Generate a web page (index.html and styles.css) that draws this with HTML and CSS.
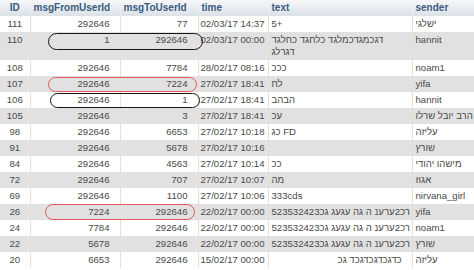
FILE: index.html
```html
<!DOCTYPE html>
<html lang="he">
<head>
<meta charset="utf-8">
<link rel="stylesheet" href="styles.css">
</head>
<body>
<div class="wrap">
<table class="grid">
<colgroup>
<col class="c-id"><col class="c-from"><col class="c-to"><col class="c-time"><col class="c-text"><col class="c-sender">
</colgroup>
<thead>
<tr><th class="id">ID</th><th>msgFromUserId</th><th>msgToUserId</th><th>time</th><th>text</th><th>sender</th></tr>
</thead>
<tbody>
<tr class="odd"><td class="id">111</td><td class="num">292646</td><td class="num">77</td><td class="time">02/03/17 14:37</td><td>5+</td><td>ישלגי</td></tr>
<tr class="even"><td class="id">110</td><td class="num">1</td><td class="num">292646</td><td class="time">02/03/17 00:00</td><td class="multi">דגכמגדכמלגד כלחגד כחלגד דגרלג</td><td>hannit</td></tr>
<tr class="odd"><td class="id">108</td><td class="num">292646</td><td class="num">7784</td><td class="time">28/02/17 08:16</td><td>כככ</td><td>noam1</td></tr>
<tr class="even"><td class="id">107</td><td class="num">292646</td><td class="num">7224</td><td class="time">27/02/17 18:41</td><td>לח</td><td>yifa</td></tr>
<tr class="odd"><td class="id">106</td><td class="num">292646</td><td class="num">1</td><td class="time">27/02/17 18:41</td><td>הבהב</td><td>hannit</td></tr>
<tr class="even"><td class="id">105</td><td class="num">292646</td><td class="num">3</td><td class="time">27/02/17 18:41</td><td>עכ</td><td>הרב יובל שרלו</td></tr>
<tr class="odd"><td class="id">98</td><td class="num">292646</td><td class="num">6653</td><td class="time">27/02/17 10:18</td><td>כג FD</td><td>עליזה</td></tr>
<tr class="even"><td class="id">91</td><td class="num">292646</td><td class="num">5678</td><td class="time">27/02/17 10:16</td><td></td><td>שורץ</td></tr>
<tr class="odd"><td class="id">84</td><td class="num">292646</td><td class="num">4563</td><td class="time">27/02/17 10:14</td><td>ככ</td><td>מישהו יהודי</td></tr>
<tr class="even"><td class="id">72</td><td class="num">292646</td><td class="num">707</td><td class="time">27/02/17 10:07</td><td>מה</td><td>אגוז</td></tr>
<tr class="odd"><td class="id">69</td><td class="num">292646</td><td class="num">1100</td><td class="time">27/02/17 10:06</td><td>333cds</td><td>nirvana_girl</td></tr>
<tr class="even"><td class="id">26</td><td class="num">7224</td><td class="num">292646</td><td class="time">22/02/17 00:00</td><td>רכ2ערענ ה גה עגעג גכ523532423</td><td>yifa</td></tr>
<tr class="odd"><td class="id">24</td><td class="num">7784</td><td class="num">292646</td><td class="time">22/02/17 00:00</td><td>רכ2ערענ ה גה עגעג גכ523532423</td><td>noam1</td></tr>
<tr class="even"><td class="id">22</td><td class="num">5678</td><td class="num">292646</td><td class="time">22/02/17 00:00</td><td>רכ2ערענ ה גה עגעג גכ523532423</td><td>שורץ</td></tr>
<tr class="odd"><td class="id">20</td><td class="num">6653</td><td class="num">292646</td><td class="time">15/02/17 00:00</td><td class="far">כדגכדגכדגכד גכ</td><td>עליזה</td></tr>
</tbody>
</table>
<span class="mark mark-black m1"></span>
<span class="mark mark-red m2"></span>
<span class="mark mark-black m3"></span>
<span class="mark mark-red m4"></span>
</div>
</body>
</html>
```
FILE: styles.css
```css
html, body {
  margin: 0;
  padding: 0;
  background: #fff;
}
.wrap {
  position: relative;
  width: 474px;
  overflow: hidden;
}
.grid {
  border-collapse: collapse;
  table-layout: fixed;
  width: 474px;
  font-family: "Liberation Sans", Arial, sans-serif;
  font-size: 9.6px;
  line-height: 12px;
  color: #4a4a4a;
}
.c-id { width: 30px; }
.c-from { width: 90px; }
.c-to { width: 78px; }
.c-time { width: 70px; }
.c-text { width: 144px; }
.c-sender { width: 62px; }
.grid th {
  height: 16px;
  padding: 0 3px;
  text-align: left;
  font-size: 10px;
  font-weight: bold;
  color: #3a5c80;
  background: linear-gradient(to bottom, #f6f7f9, #dbe1e7);
  border-right: 1px solid #eef1f4;
  white-space: nowrap;
  box-sizing: border-box;
}
.grid td {
  padding: 2px 3px;
  vertical-align: top;
  border-right: 1px solid #f1ddd0;
  overflow: hidden;
  white-space: nowrap;
}
.grid td.multi { white-space: normal; }
.grid tr.odd td { background: #fff; }
.grid tr.even td { background: #e1e1e1; }
.grid .id { text-align: center; }
.grid td.num { text-align: right; padding-right: 10px; }
.grid td.time { padding-left: 2px; padding-right: 2px; }
.grid td.far { text-align: right; padding-right: 10px; }
.mark {
  position: absolute;
  box-sizing: border-box;
  border: 1.5px solid #111;
  border-radius: 9px;
}
.mark-black { border-color: #151515; }
.mark-red { border-color: #e05a5a; }
.m1 { left: 48px; top: 33px; width: 155px; height: 17px; }
.m2 { left: 48px; top: 77px; width: 149px; height: 15px; }
.m3 { left: 50px; top: 93px; width: 150px; height: 15px; }
.m4 { left: 45px; top: 204px; width: 150px; height: 16px; }
```
